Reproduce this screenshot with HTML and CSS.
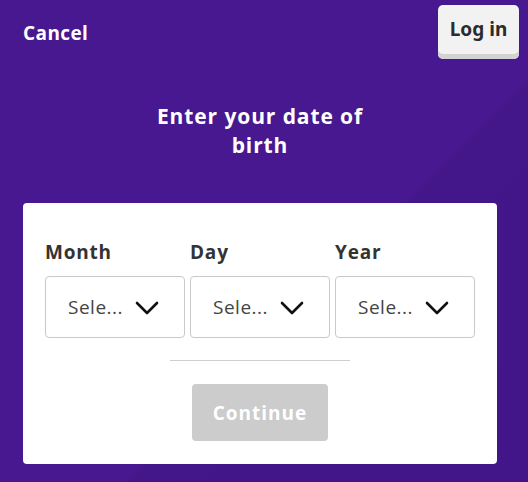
FILE: index.html
```html
<!DOCTYPE html>
<html>
<head>
<meta charset="utf-8">
<link rel="stylesheet" href="styles.css">
</head>
<body>
<div class="page">
  <header class="topbar">
    <span class="cancel">Cancel</span>
    <button class="login">Log in</button>
  </header>
  <h1 class="title">Enter your date of<br>birth</h1>
  <div class="card">
    <div class="fields">
      <div class="field">
        <div class="label">Month</div>
        <div class="select"><span>Sele...</span><svg width="24" height="14" viewBox="0 0 24 14"><path d="M2 2 L12 12 L22 2" fill="none" stroke="#111" stroke-width="2.6" stroke-linecap="round" stroke-linejoin="round"/></svg></div>
      </div>
      <div class="field">
        <div class="label">Day</div>
        <div class="select"><span>Sele...</span><svg width="24" height="14" viewBox="0 0 24 14"><path d="M2 2 L12 12 L22 2" fill="none" stroke="#111" stroke-width="2.6" stroke-linecap="round" stroke-linejoin="round"/></svg></div>
      </div>
      <div class="field">
        <div class="label">Year</div>
        <div class="select"><span>Sele...</span><svg width="24" height="14" viewBox="0 0 24 14"><path d="M2 2 L12 12 L22 2" fill="none" stroke="#111" stroke-width="2.6" stroke-linecap="round" stroke-linejoin="round"/></svg></div>
      </div>
    </div>
    <div class="divider"></div>
    <button class="continue">Continue</button>
  </div>
</div>
</body>
</html>
```
FILE: styles.css
```css
html, body {
  margin: 0;
  padding: 0;
  height: 100%;
}
body {
  background: linear-gradient(135deg, #47188f 0%, #47188f 60%, #431689 60.5%, #421589 100%);
  font-family: "Open Sans", "Noto Sans", sans-serif;
  overflow: hidden;
}
.page {
  width: 474px;
  margin-left: 23px;
  padding-top: 5px;
}
.topbar {
  display: flex;
  justify-content: space-between;
  align-items: flex-start;
  height: 54px;
  margin-right: -22px;
}
.cancel {
  color: #fff;
  font-weight: 700;
  font-size: 19px;
  letter-spacing: 0.4px;
  margin-top: 15px;
}
.login {
  width: 81px;
  height: 54px;
  border: none;
  border-radius: 5px;
  background: #f2f2f2;
  box-shadow: inset 0 -5px 0 #d3d3d3;
  color: #2b2b2b;
  font-family: "Noto Sans", "Open Sans", sans-serif;
  font-weight: 700;
  font-size: 19px;
  padding: 0 0 6px 0;
}
.title {
  margin: 43px 0 0 0;
  text-align: center;
  color: #fff;
  font-weight: 700;
  font-size: 21px;
  line-height: 29px;
  letter-spacing: 0.9px;
}
.card {
  margin-top: 43px;
  background: #fff;
  border-radius: 4px;
  padding: 35px 22px 23px 22px;
  display: flex;
  flex-direction: column;
  align-items: center;
}
.fields {
  display: grid;
  grid-template-columns: repeat(3, 140px);
  gap: 5px;
  width: 430px;
}
.label {
  color: #333;
  font-weight: 700;
  font-size: 19px;
  line-height: 28px;
  letter-spacing: 0.8px;
  margin-bottom: 10px;
}
.select {
  height: 62px;
  box-sizing: border-box;
  border: 1px solid #c9c9c9;
  border-radius: 4px;
  display: flex;
  align-items: center;
  justify-content: space-between;
  padding: 0 25px 0 22px;
  color: #444;
  font-size: 19px;
  letter-spacing: 0.5px;
}
.select svg {
  margin-top: 2px;
}
.divider {
  width: 180px;
  height: 1px;
  background: #cfcfcf;
  margin-top: 22px;
}
.continue {
  margin-top: 23px;
  width: 136px;
  height: 57px;
  border: none;
  border-radius: 4px;
  background: #cccccc;
  color: #fff;
  font-family: "Open Sans", "Noto Sans", sans-serif;
  font-weight: 700;
  font-size: 19px;
  letter-spacing: 1px;
}
```
